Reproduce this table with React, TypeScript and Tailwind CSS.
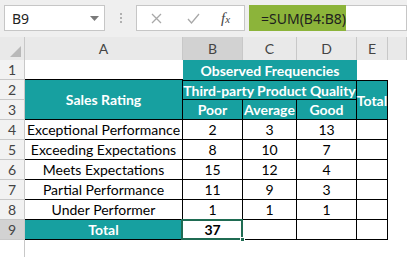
import React from 'react';

const teal = 'bg-[#17a0a0] text-white font-bold';
const cellFont = { fontFamily: 'Lato, "Liberation Sans", sans-serif' };

const rows = [
  ['Exceptional Performance', '2', '3', '13'],
  ['Exceeding Expectations', '8', '10', '7'],
  ['Meets Expectations', '15', '12', '4'],
  ['Partial Performance', '11', '9', '3'],
  ['Under Performer', '1', '1', '1'],
];

const RowHead = ({ n, active }: { n: string; active?: boolean }) => (
  <div
    className={`flex items-center justify-center border-r border-b border-[#c8c8c8] text-[14px] text-[#444] ${
      active ? 'bg-[#d2d2d2]' : 'bg-[#f2f2f2]'
    }`}
  >
    {n}
  </div>
);

const ColHead = ({ l, active }: { l: string; active?: boolean }) => (
  <div
    className={`flex items-center justify-center border-r border-[#c8c8c8] text-[14px] text-[#444] ${
      active ? 'bg-[#d2d2d2]' : 'bg-[#e9e9e9]'
    }`}
  >
    {l}
  </div>
);

const Toolbar = () => (
  <div
    className="flex h-[37px] items-start bg-[#efefef] pt-[5px] pl-[4px]"
    style={{ fontFamily: '"Noto Sans", "Liberation Sans", sans-serif' }}
  >
    <div className="flex h-[26px] w-[101px] items-center justify-between border border-[#c6c6c6] bg-white pl-[7px] pr-[5px] text-[14px] text-[#222]">
      <span>B9</span>
      <svg width="9" height="5" viewBox="0 0 9 5">
        <path d="M0 0 L9 0 L4.5 5 Z" fill="#7a7a7a" />
      </svg>
    </div>
    <div className="flex w-[31px] flex-col items-center gap-[2px] pt-[8px]">
      <span className="h-[2px] w-[2px] bg-[#b0b0b0]" />
      <span className="h-[2px] w-[2px] bg-[#b0b0b0]" />
      <span className="h-[2px] w-[2px] bg-[#b0b0b0]" />
    </div>
    <div className="flex h-[26px] w-[109px] items-center border border-[#c6c6c6] bg-white pl-[14px]">
      <svg width="11" height="11" viewBox="0 0 11 11">
        <path d="M1 1 L10 10 M10 1 L1 10" stroke="#a8a8a8" strokeWidth="1.3" />
      </svg>
      <svg width="13" height="11" viewBox="0 0 13 11" className="ml-[25px]">
        <path d="M1 6 L4.5 10 L12 1" stroke="#a8a8a8" strokeWidth="1.3" fill="none" />
      </svg>
      <span
        className="ml-[21px] text-[15px] italic text-[#444]"
        style={{ fontFamily: '"Liberation Serif", serif' }}
      >
        f<span className="text-[11px]">x</span>
      </span>
    </div>
    <div className="ml-[4px] flex h-[26px] w-[97px] items-center bg-[#8cb43a] pl-[12px] text-[14px] text-[#1e1e1e]">
      =SUM(B4:B8)
    </div>
    <div className="h-[26px] flex-1 border border-l-0 border-[#c6c6c6] bg-white" />
  </div>
);

export default function App() {
  return (
    <div className="h-[257px] w-[407px] overflow-hidden bg-white">
      <Toolbar />
      <div
        className="grid grid-cols-[25px_158px_60px_54px_60px_31px_19px] grid-rows-[23px_repeat(9,20px)_17px] text-[14px] text-black"
        style={cellFont}
      >
        {/* column headers */}
        <div className="flex items-end justify-end border-r border-[#c8c8c8] bg-[#e9e9e9] p-[3px]">
          <svg width="11" height="11" viewBox="0 0 11 11">
            <path d="M11 0 L11 11 L0 11 Z" fill="#b9b9b9" />
          </svg>
        </div>
        <ColHead l="A" />
        <ColHead l="B" active />
        <ColHead l="C" />
        <ColHead l="D" />
        <ColHead l="E" />
        <ColHead l="" />

        {/* row 1 */}
        <RowHead n="1" />
        <div className="border-b border-black" />
        <div className={`col-span-3 flex items-center justify-center ${teal}`}>Observed Frequencies</div>
        <div />
        <div />

        {/* rows 2-3 */}
        <RowHead n="2" />
        <div className={`row-span-2 flex items-center justify-center border-r border-b border-black ${teal}`}>
          Sales Rating
        </div>
        <div className={`col-span-3 flex items-center justify-center border-t border-r border-b border-black ${teal}`}>
          Third-party Product Quality
        </div>
        <div className={`row-span-2 flex items-center justify-center border-t border-r border-b border-black ${teal}`}>
          Total
        </div>
        <div className="row-span-2" />
        <RowHead n="3" />
        <div className={`flex items-center justify-center border-r border-b border-black ${teal}`}>Poor</div>
        <div className={`flex items-center justify-center border-r border-b border-black ${teal}`}>Average</div>
        <div className={`flex items-center justify-center border-r border-b border-black ${teal}`}>Good</div>

        {/* rows 4-8 */}
        {rows.map((r, i) => (
          <React.Fragment key={r[0]}>
            <RowHead n={String(i + 4)} />
            {r.map((c) => (
              <div key={c + i} className="flex items-center justify-center border-r border-b border-black">
                {c}
              </div>
            ))}
            <div className="border-r border-b border-black" />
            <div />
          </React.Fragment>
        ))}

        {/* row 9 */}
        <RowHead n="9" active />
        <div className={`flex items-center justify-center border-r border-b border-black ${teal}`}>Total</div>
        <div className="relative flex items-center justify-center border-r border-b border-black font-bold">
          37
          <div className="absolute -top-[1px] -left-[2px] -right-[1px] -bottom-[1px] border-2 border-[#1f6b52]" />
          <div className="absolute -right-[3px] -bottom-[3px] h-[5px] w-[5px] border border-white bg-[#1f6b52]" />
        </div>
        <div className="border-r border-b border-black" />
        <div className="border-r border-b border-black" />
        <div className="border-r border-b border-black" />
        <div />

        {/* row 10 */}
        <div className="border-r border-[#c8c8c8] bg-white" />
        <div className="col-span-6" />
      </div>
    </div>
  );
}
